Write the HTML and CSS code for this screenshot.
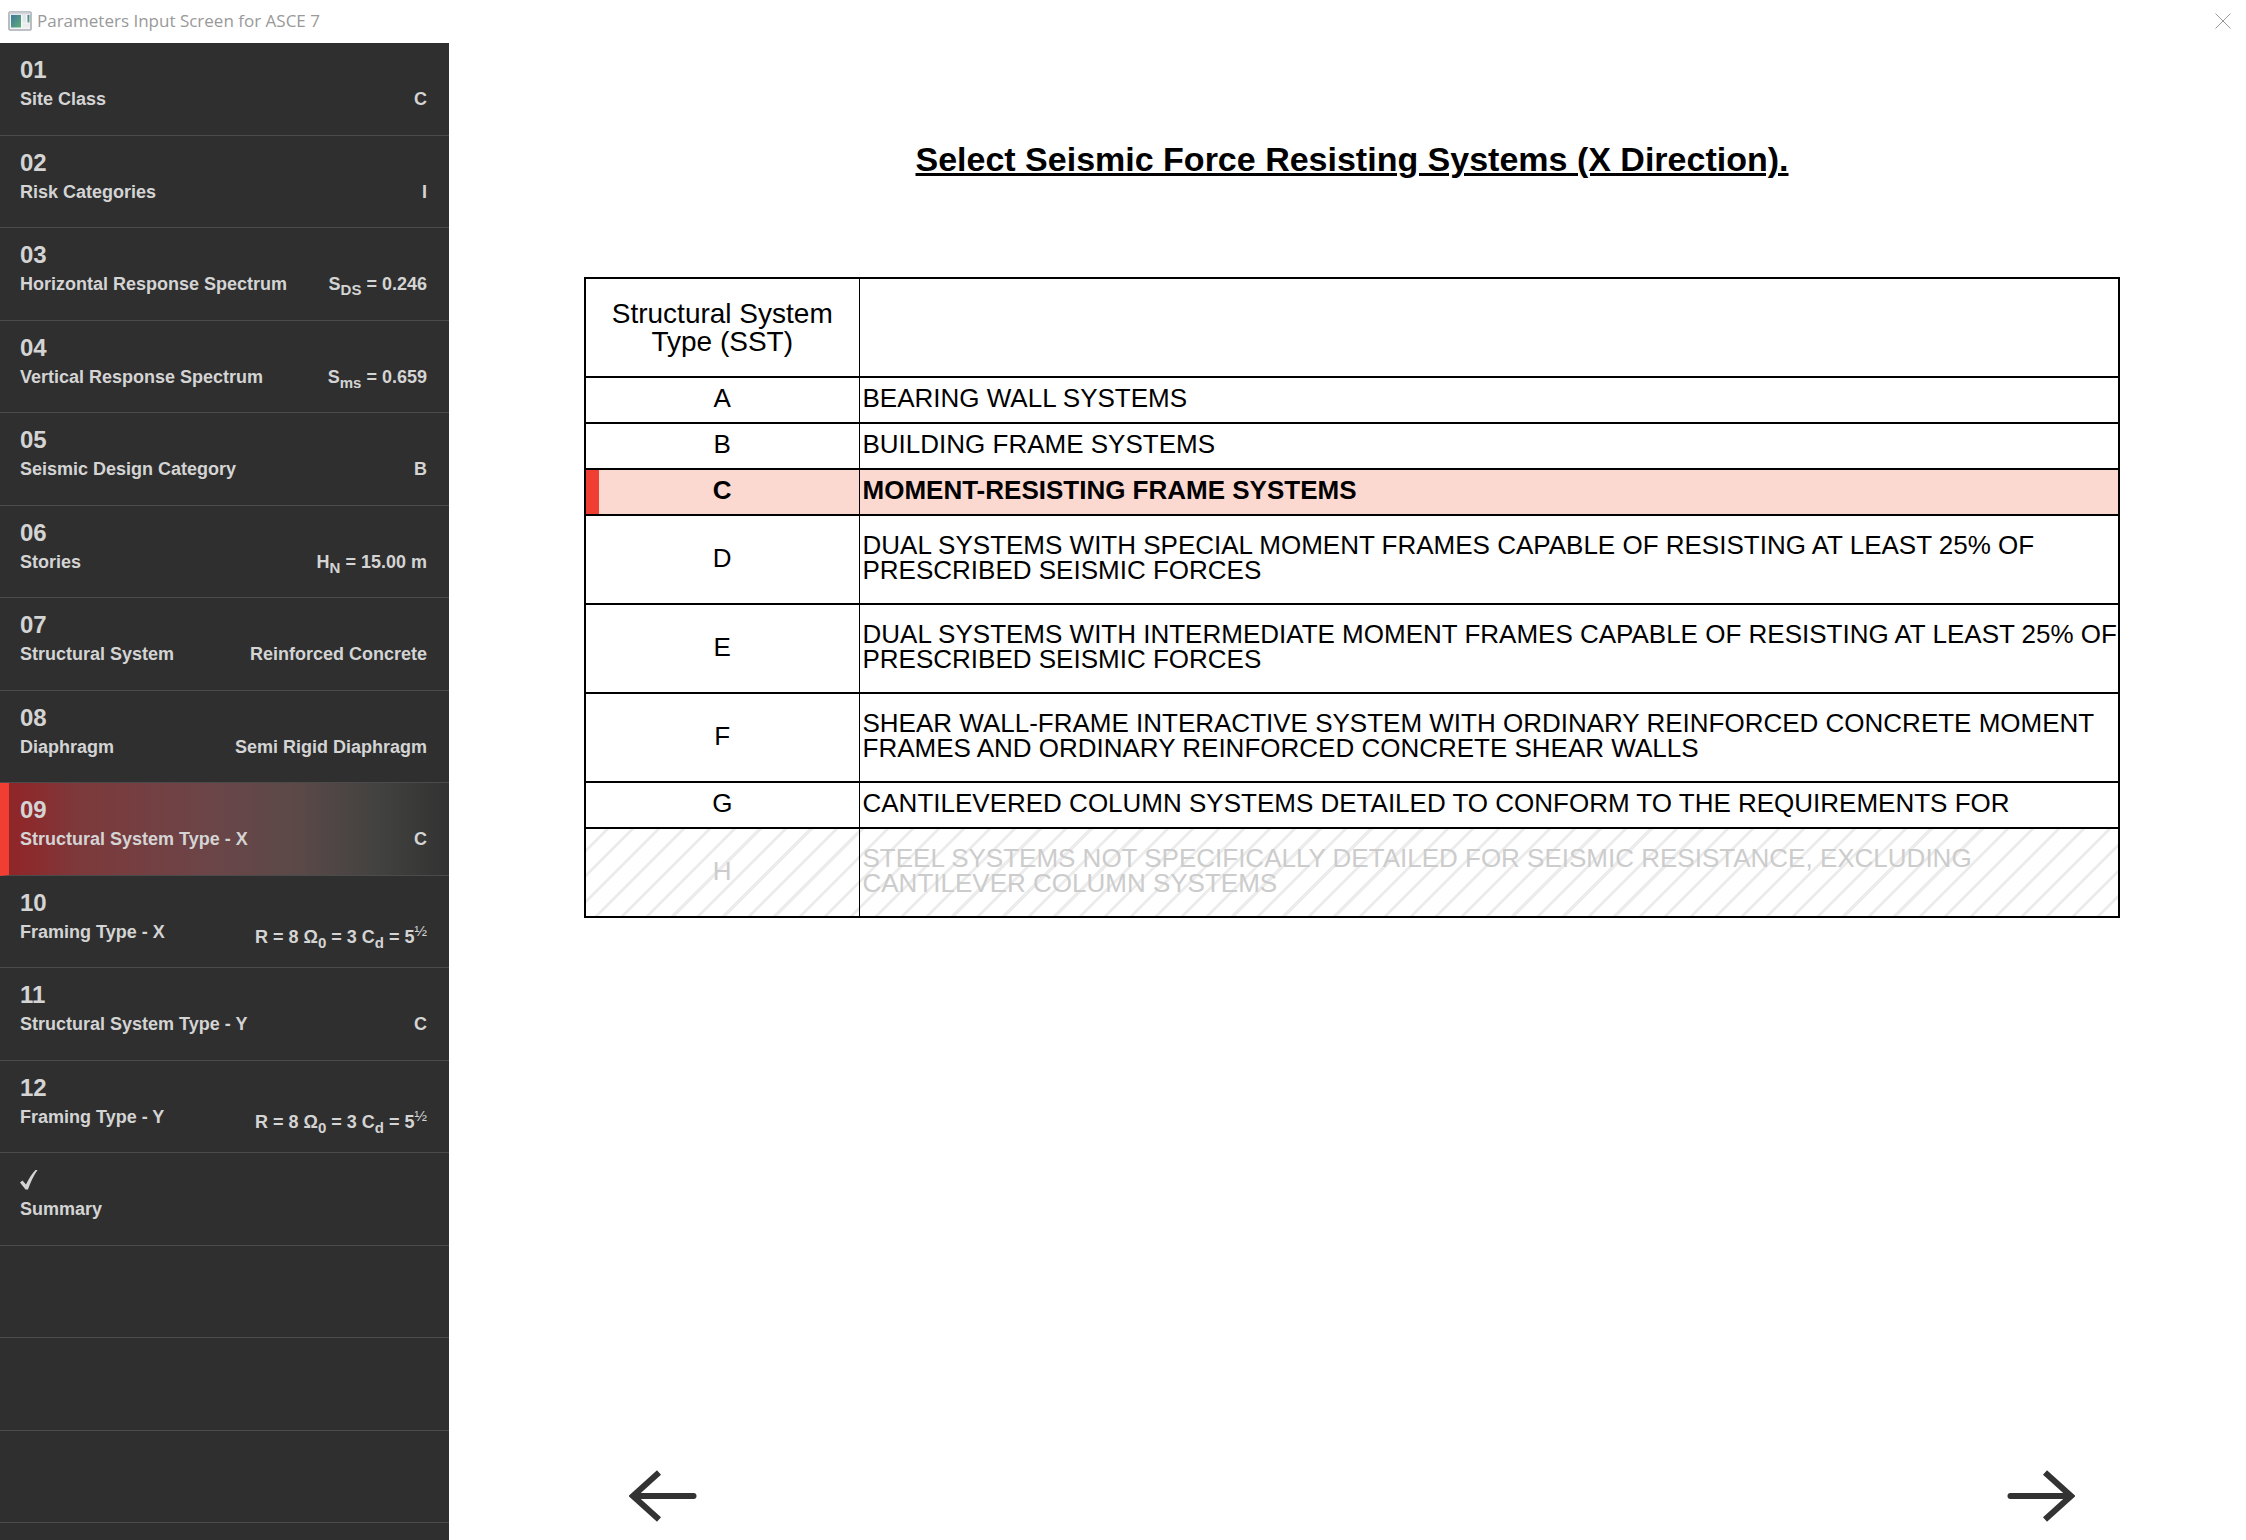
FILE: index.html
```
<!DOCTYPE html>
<html lang="en">
<head>
  <meta charset="UTF-8" />
  <meta name="viewport" content="width=device-width, initial-scale=1.0" />
  <title>Parameters Input Screen for ASCE 7</title>
  <link rel="stylesheet" href="styles.css">
</head>
<body>
  <header class="titlebar">
    <svg class="app-icon" viewBox="0 0 24 20" width="24" height="20" aria-hidden="true">
      <defs>
        <linearGradient id="pane" x1="0" y1="0" x2="1" y2="1">
          <stop offset="0" stop-color="#3f78a0" />
          <stop offset="1" stop-color="#5fae74" />
        </linearGradient>
      </defs>
      <rect x="1" y="1" width="22" height="18" rx="1" fill="#f4f5f6" stroke="#a9adb2" stroke-width="1.6" />
      <rect x="1.5" y="1.5" width="21" height="2" fill="#d3d7dc" />
      <rect x="3" y="4" width="10" height="12.5" fill="url(#pane)" />
      <rect x="14.5" y="4" width="3.5" height="7.5" fill="#e3e6e9" />
      <rect x="19.5" y="4" width="2" height="7.5" fill="url(#pane)" />
      <rect x="14.5" y="12.5" width="7" height="4" fill="#e9ebed" />
    </svg>
    <span class="window-title">Parameters Input Screen for ASCE 7</span>
    <button class="close" aria-label="Close">
      <svg viewBox="0 0 16 16" width="16" height="16"><path d="M.5 .5 15.5 15.5M15.5 .5 .5 15.5" /></svg>
    </button>
  </header>

  <div class="app">
    <nav class="sidebar">
      <button class="step"><span class="num">01</span><span class="info"><span>Site Class</span><span>C</span></span></button>
      <button class="step"><span class="num">02</span><span class="info"><span>Risk Categories</span><span>I</span></span></button>
      <button class="step"><span class="num">03</span><span class="info"><span>Horizontal Response Spectrum</span><span>S<sub>DS</sub> = 0.246</span></span></button>
      <button class="step"><span class="num">04</span><span class="info"><span>Vertical Response Spectrum</span><span>S<sub>ms</sub> = 0.659</span></span></button>
      <button class="step"><span class="num">05</span><span class="info"><span>Seismic Design Category</span><span>B</span></span></button>
      <button class="step"><span class="num">06</span><span class="info"><span>Stories</span><span>H<sub>N</sub> = 15.00 m</span></span></button>
      <button class="step"><span class="num">07</span><span class="info"><span>Structural System</span><span>Reinforced Concrete</span></span></button>
      <button class="step"><span class="num">08</span><span class="info"><span>Diaphragm</span><span>Semi Rigid Diaphragm</span></span></button>
      <button class="step active" aria-current="step"><span class="num">09</span><span class="info"><span>Structural System Type - X</span><span>C</span></span></button>
      <button class="step"><span class="num">10</span><span class="info"><span>Framing Type - X</span><span>R = 8 Ω<sub>0</sub> = 3 C<sub>d</sub> = 5<sup>½</sup></span></span></button>
      <button class="step"><span class="num">11</span><span class="info"><span>Structural System Type - Y</span><span>C</span></span></button>
      <button class="step"><span class="num">12</span><span class="info"><span>Framing Type - Y</span><span>R = 8 Ω<sub>0</sub> = 3 C<sub>d</sub> = 5<sup>½</sup></span></span></button>
      <button class="step">
        <span class="num"><svg class="check" viewBox="0 0 18 20" width="18" height="20" aria-hidden="true"><path d="M0 12.5 2.5 10.5 6 14.5C8.500 9 12 3.500 15.500 0H17.500C13.500 6 10.500 12 8 19.500H5.500Z" /></svg></span>
        <span class="info"><span>Summary</span></span>
      </button>
      <div class="step"></div>
      <div class="step"></div>
      <div class="step"></div>
    </nav>

    <main class="main">
      <h1>Select Seismic Force Resisting Systems (X Direction).</h1>

      <table class="systems">
        <thead>
          <tr><th class="code">Structural System<br />Type (SST)</th><th></th></tr>
        </thead>
        <tbody>
          <tr><td class="code">A</td><td>BEARING WALL SYSTEMS</td></tr>
          <tr><td class="code">B</td><td>BUILDING FRAME SYSTEMS</td></tr>
          <tr class="selected"><td class="code">C</td><td>MOMENT-RESISTING FRAME SYSTEMS</td></tr>
          <tr class="tall"><td class="code">D</td><td>DUAL SYSTEMS WITH SPECIAL MOMENT FRAMES CAPABLE OF RESISTING AT LEAST 25% OF PRESCRIBED SEISMIC FORCES</td></tr>
          <tr class="tall"><td class="code">E</td><td>DUAL SYSTEMS WITH INTERMEDIATE MOMENT FRAMES CAPABLE OF RESISTING AT LEAST 25% OF PRESCRIBED SEISMIC FORCES</td></tr>
          <tr class="tall"><td class="code">F</td><td>SHEAR WALL-FRAME INTERACTIVE SYSTEM WITH ORDINARY REINFORCED CONCRETE MOMENT FRAMES AND ORDINARY REINFORCED CONCRETE SHEAR WALLS</td></tr>
          <tr><td class="code">G</td><td>CANTILEVERED COLUMN SYSTEMS DETAILED TO CONFORM TO THE REQUIREMENTS FOR</td></tr>
          <tr class="tall disabled"><td class="code">H</td><td>STEEL SYSTEMS NOT SPECIFICALLY DETAILED FOR SEISMIC RESISTANCE, EXCLUDING CANTILEVER COLUMN SYSTEMS</td></tr>
        </tbody>
      </table>

      <div class="pager">
        <button class="arrow" aria-label="Previous">
          <svg viewBox="0 0 68 52" width="68" height="52"><path class="shaft" d="M8 26H64.500" /><path d="M30 2.500 4 26 30 49.500" /></svg>
        </button>
        <button class="arrow" aria-label="Next">
          <svg viewBox="0 0 68 52" width="68" height="52"><path class="shaft" d="M60 26H3.500" /><path d="M38 2.500 64 26 38 49.500" /></svg>
        </button>
      </div>
    </main>
  </div>
</body>
</html>
```
FILE: styles.css
```
:root {
  --sidebar-bg: #2f2f2f;
  --sidebar-line: #4b4b4b;
  --sidebar-text: #d4d4d4;
  --accent: #f03e33;
  --selected-bg: #fcd9d0;
  --font: "Liberation Sans", Arial, sans-serif;
}

* {
  box-sizing: border-box;
}

body {
  margin: 0;
  font-family: var(--font);
  background: #fff;
  color: #000;
  display: flex;
  flex-direction: column;
  height: 100vh;
  overflow: hidden;
}

button {
  border: none;
  padding: 0;
  background: transparent;
  font: inherit;
  color: inherit;
  cursor: pointer;
}

svg {
  display: block;
}

.titlebar {
  display: flex;
  align-items: center;
  flex: none;
  height: 43px;
  padding: 0 15px 2px 8px;
}

.window-title {
  flex: 1;
  margin-left: 5px;
  font-family: "Open Sans", "Segoe UI", sans-serif;
  font-size: 17px;
  color: #999;
}

.close path {
  stroke: #999;
  fill: none;
}

.app {
  display: flex;
  flex: 1;
  min-height: 0;
}

/* sidebar */
.sidebar {
  flex: none;
  width: 449px;
  background: var(--sidebar-bg);
  color: var(--sidebar-text);
  font-weight: bold;
  overflow: hidden;
}

.step {
  display: flex;
  flex-direction: column;
  justify-content: flex-start;
  gap: 5px;
  width: 100%;
  height: 93px;
  padding: 13px 22px 0 20px;
  border-bottom: 1px solid var(--sidebar-line);
  text-align: left;
}

.step:nth-child(even) {
  height: 92px;
}

.step.active {
  padding-left: 11px;
  border-left: 9px solid var(--accent);
  background: linear-gradient(90deg, #8f272a 2%, #7d393b 16%, #6b4548 46%, #5a4948 66%, #424240 84%, #323232 100%);
}

.num {
  height: 28px;
  font-size: 24px;
  line-height: 28px;
}

.check {
  margin-top: 4px;
  fill: var(--sidebar-text);
}

.info {
  display: flex;
  justify-content: space-between;
  align-items: flex-start;
  width: 100%;
  font-size: 18px;
  line-height: 21px;
}

sub,
sup {
  font-size: 15px;
}

sup {
  font-weight: normal;
  line-height: 17px;
}

/* content */
.main {
  flex: 1;
  display: flex;
  flex-direction: column;
  padding: 96px 126px 18px 135px;
}

h1 {
  margin: 0 0 98px;
  font-size: 34px;
  line-height: 40px;
  text-align: center;
  text-decoration: underline;
  text-decoration-thickness: 3px;
}

.systems {
  width: 100%;
  border-collapse: collapse;
  border: 2px solid #000;
  font-size: 26px;
  line-height: 25px;
}

.systems th,
.systems td {
  border-top: 2px solid #000;
  border-left: 1px solid #000;
  font-weight: normal;
  text-align: left;
}

.systems th {
  height: 99px;
  padding: 0;
  border-top-width: 1px;
  font-size: 28px;
  line-height: 28px;
}

.systems td {
  height: 46px;
  padding: 0 0 3px 3px;
}

.systems .code {
  width: 274px;
  padding-left: 0;
  text-align: center;
}

.systems .tall td {
  height: 89px;
}

.systems .selected td {
  background: var(--selected-bg);
  font-weight: bold;
}

.systems .selected .code {
  box-shadow: inset 13px 0 var(--accent);
}

.systems .disabled {
  background: repeating-linear-gradient(135deg, #fff 0 15px, #ececec 15px 18px);
  color: #ccc;
}

.pager {
  display: flex;
  justify-content: space-between;
  margin-top: auto;
  padding: 0 45px;
}

.arrow path {
  fill: none;
  stroke: #333;
  stroke-width: 6;
}

.arrow .shaft {
  stroke-linecap: round;
}
```
